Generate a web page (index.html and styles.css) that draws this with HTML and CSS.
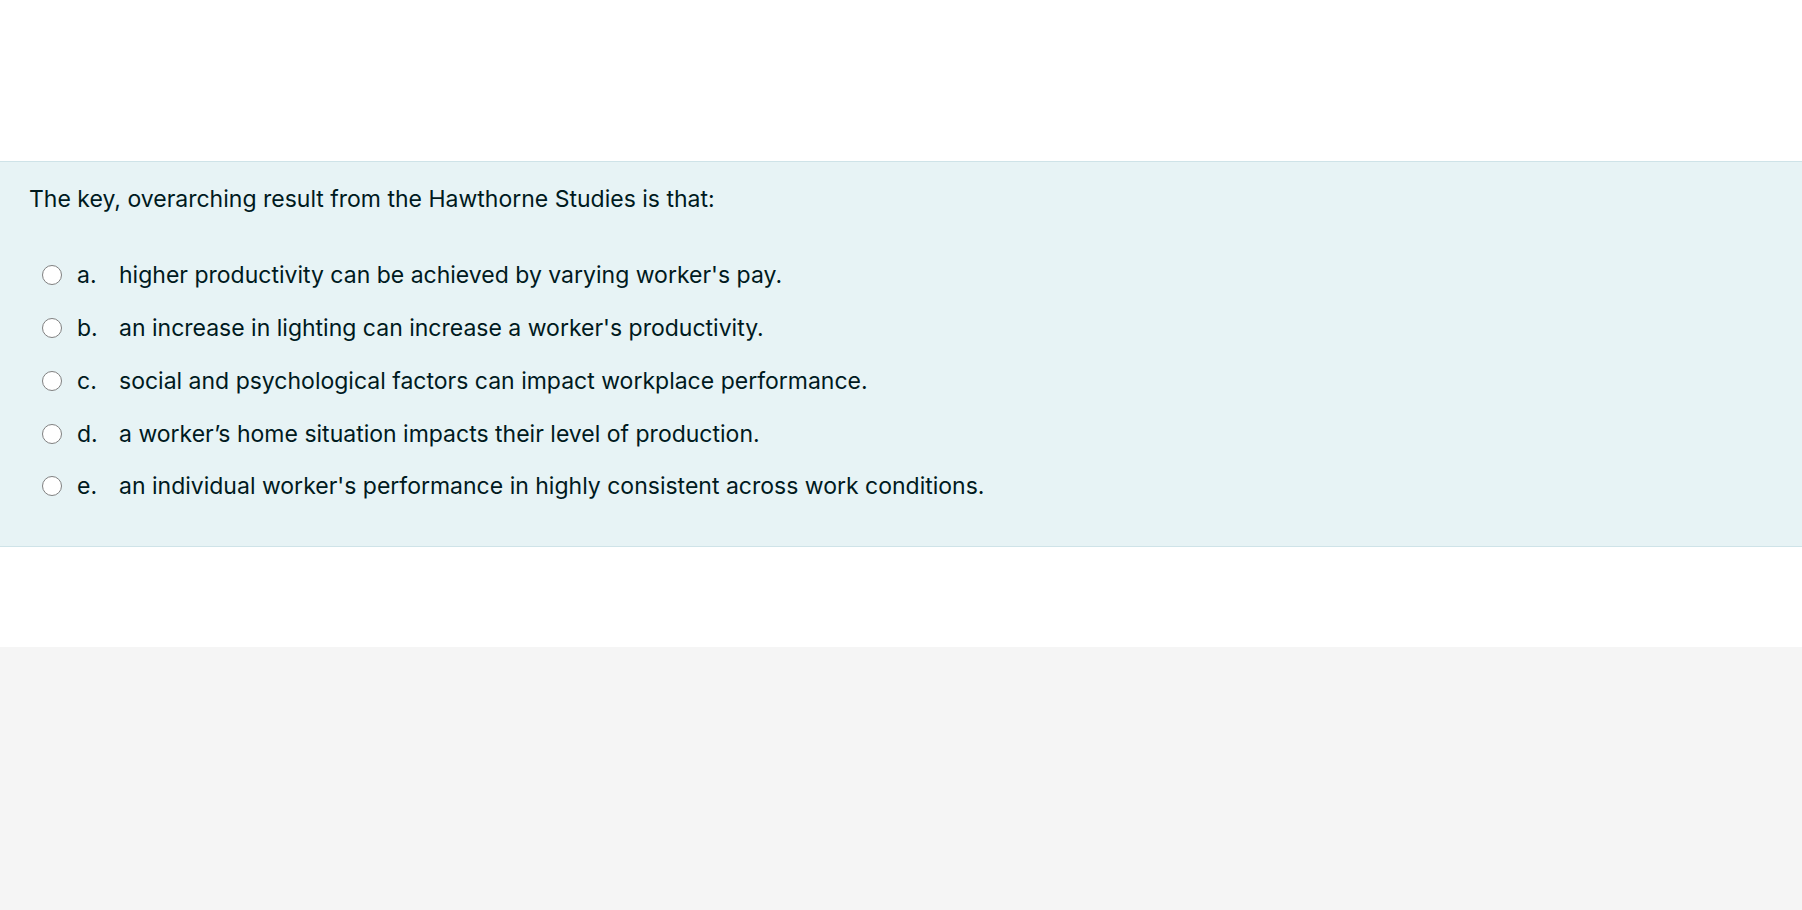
FILE: index.html
```html
<!DOCTYPE html>
<html>
<head>
<meta charset="utf-8">
<link rel="stylesheet" href="styles.css">
</head>
<body>
<div class="page">
  <div class="top-space"></div>
  <div class="formulation">
    <div class="qtext">The key, overarching result from the Hawthorne Studies is that:</div>
    <div class="answers">
      <div class="row"><span class="radio"></span><span class="letter">a.</span><span class="text">higher productivity can be achieved by varying worker's pay.</span></div>
      <div class="row"><span class="radio"></span><span class="letter">b.</span><span class="text">an increase in lighting can increase a worker's productivity.</span></div>
      <div class="row"><span class="radio"></span><span class="letter">c.</span><span class="text">social and psychological factors can impact workplace performance.</span></div>
      <div class="row"><span class="radio"></span><span class="letter">d.</span><span class="text">a worker’s home situation impacts their level of production.</span></div>
      <div class="row"><span class="radio"></span><span class="letter">e.</span><span class="text">an individual worker's performance in highly consistent across work conditions.</span></div>
    </div>
  </div>
  <div class="bottom-space"></div>
</div>
<div class="footer"></div>
</body>
</html>
```
FILE: styles.css
```css
html, body {
  margin: 0;
  padding: 0;
  height: 100%;
}
body {
  background: #f5f5f5;
  font-family: Inter, "Noto Sans", sans-serif;
  color: #001a1e;
  display: flex;
  flex-direction: column;
}
.page {
  background: #ffffff;
}
.top-space {
  height: 161px;
}
.formulation {
  background: #e7f3f5;
  border-top: 1px solid #cfe3e8;
  border-bottom: 1px solid #cfe3e8;
  padding: 19px 0 33px 29px;
}
.qtext {
  font-size: 23px;
  line-height: 36px;
}
.answers {
  margin-top: 32px;
  display: flex;
  flex-direction: column;
}
.row {
  height: 52.75px;
  display: flex;
  align-items: center;
  font-size: 23px;
}
.radio {
  width: 18px;
  height: 18px;
  border: 1.5px solid #808080;
  border-radius: 50%;
  background: #fff;
  margin-left: 13px;
  margin-right: 15px;
  flex: none;
}
.letter {
  width: 42px;
}
.bottom-space {
  height: 100px;
}
.footer {
  flex: 1;
  background: #f5f5f5;
}
```
